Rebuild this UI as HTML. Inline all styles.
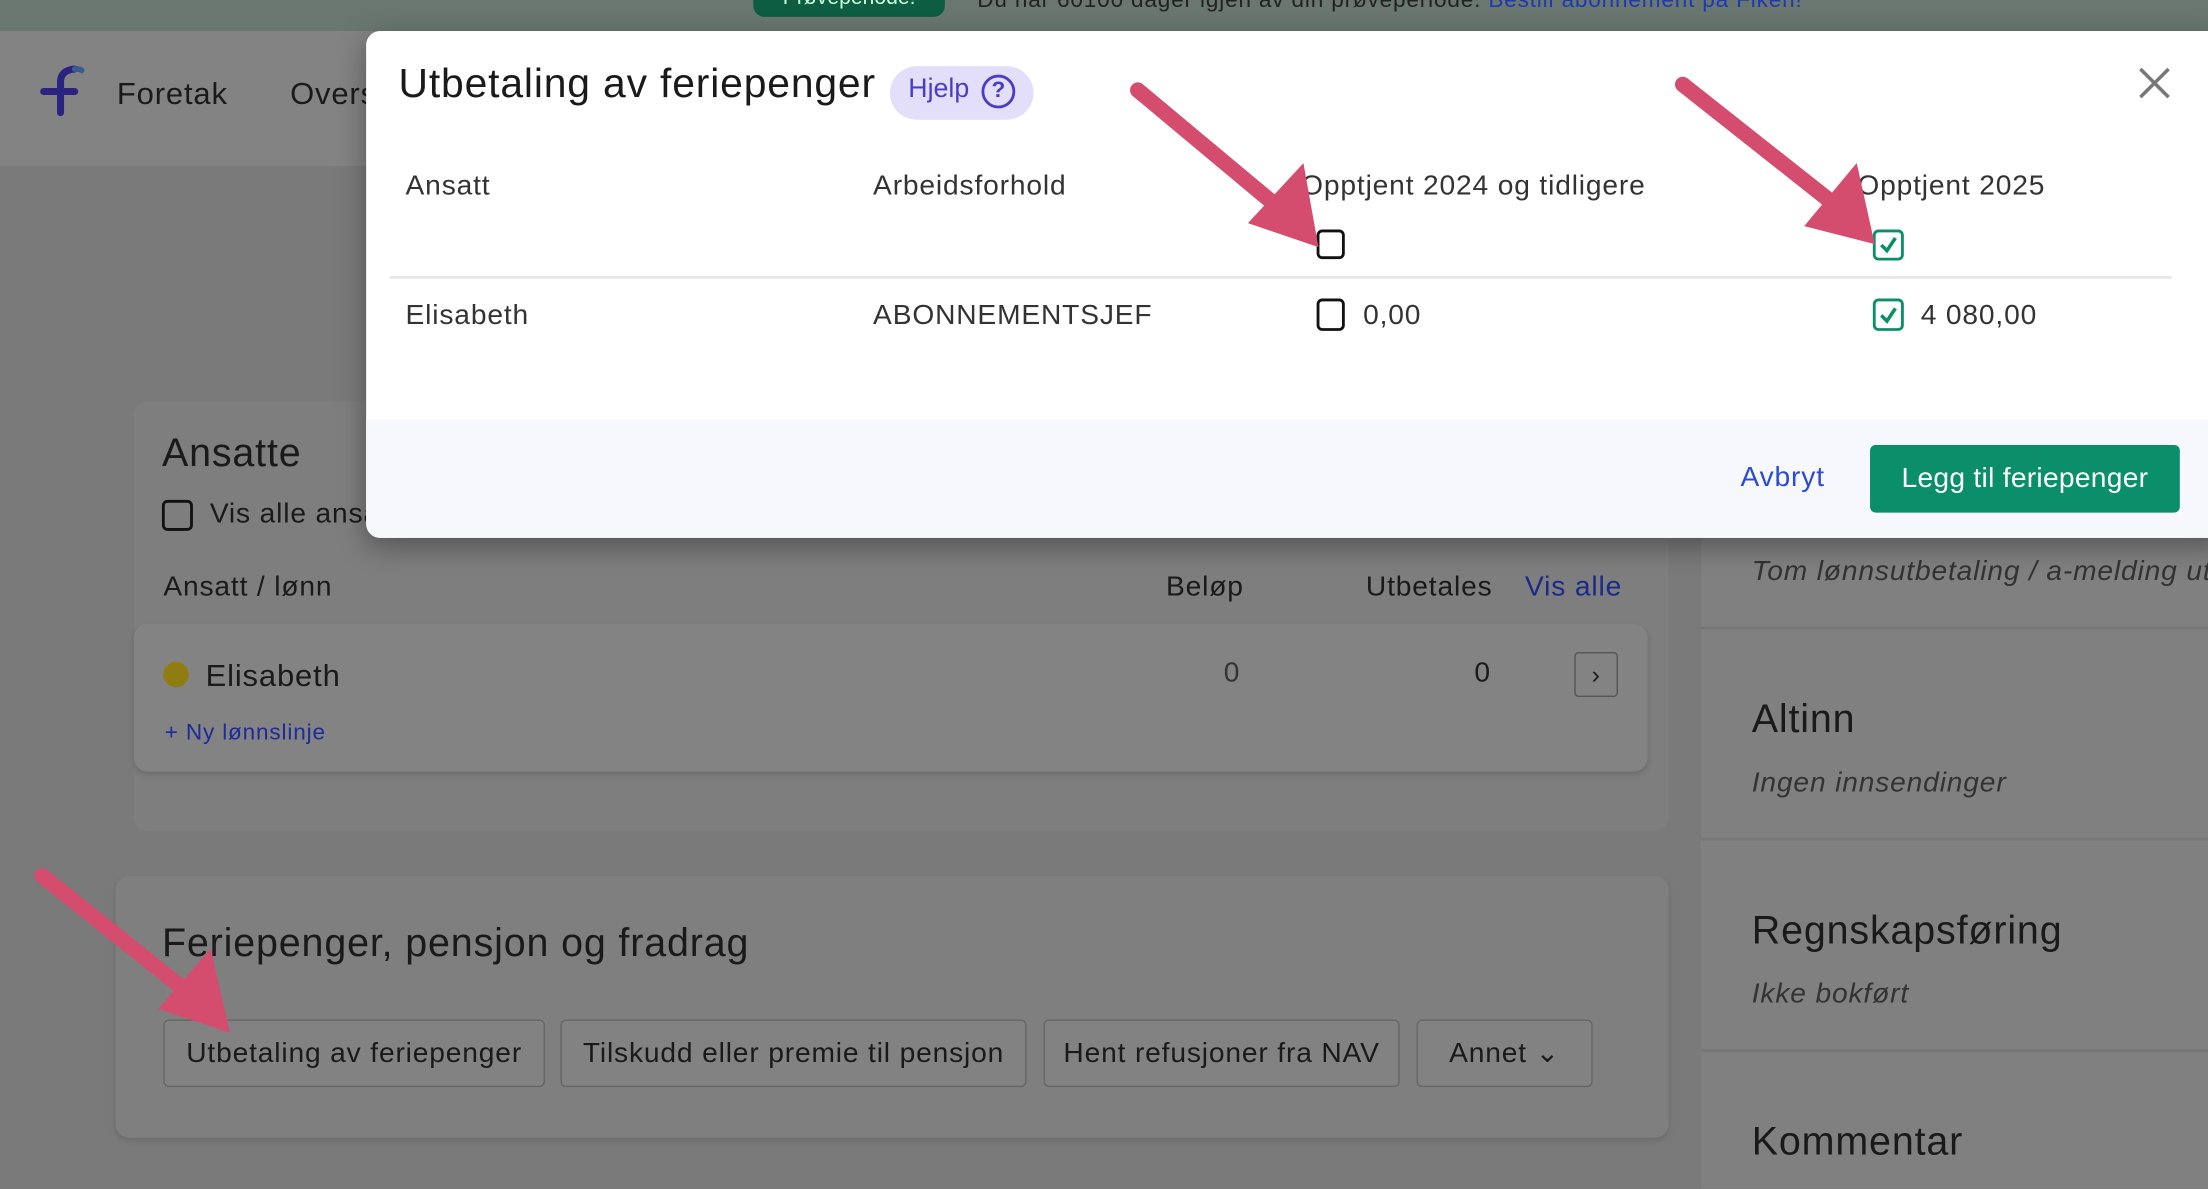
<!DOCTYPE html>
<html><head><meta charset="utf-8"><style>
html,body{margin:0;padding:0;width:2208px;height:1188px;overflow:hidden;background:#7a7a7a}
#w{position:absolute;left:0;top:0;width:1568px;height:844px;transform:scale(1.40816);transform-origin:0 0;font-family:"Liberation Sans",sans-serif;color:#1c1c1c;background:#7a7a7a;letter-spacing:0.6px}
.a{position:absolute;white-space:nowrap}
.bg{color:#1a1a1a}
.btn{position:absolute;border:1px solid #666;border-radius:4px;height:46px;top:724px;font-size:20px;line-height:46px;text-align:center;color:#1a1a1a;background:#828282}
.cb{position:absolute;width:18px;height:18px;border:2.5px solid #111;border-radius:4px;box-sizing:content-box}
.cbg{position:absolute;width:18px;height:18px;border:2.5px solid #0a8f6a;border-radius:4px}
.t{font-size:20px}
</style></head><body><div id="w">
<div class="a" style="left:0;top:0;width:1568px;height:22px;background:#6a7770"></div>
<div class="a" style="left:535px;top:-8px;width:136px;height:20px;background:#0c5d42;border-radius:8px;color:#cfd;font-size:15px;text-align:center;line-height:14px;letter-spacing:0">Prøveperiode!</div>
<div class="a" style="left:694px;top:-8px;font-size:16px;color:#222">Du har 60100 dager igjen av din prøveperiode. <span style="color:#1d3ab0">Bestill abonnement på Fiken!</span></div>
<div class="a" style="left:0;top:22px;width:1568px;height:96px;background:#838383"></div>
<svg class="a" style="left:26px;top:44px" width="36" height="40" viewBox="0 0 36 40"><path d="M17 36V14q0-8 10-9" stroke="#2b2380" stroke-width="5" fill="none" stroke-linecap="round"/><path d="M5 21h22" stroke="#2b2380" stroke-width="5" stroke-linecap="round"/><path d="M27 5q4 0 5 1" stroke="#3a5a90" stroke-width="4" fill="none" stroke-linecap="round"/></svg>
<div class="a bg" style="left:83px;top:54px;font-size:22px">Foretak</div>
<div class="a bg" style="left:206px;top:54px;font-size:22px">Oversikt</div>
<div class="a" style="left:95px;top:285px;width:1090px;height:305px;background:#7e7e7e;border-radius:10px"></div>
<div class="a bg" style="left:115px;top:306px;font-size:28px">Ansatte</div>
<div class="cb" style="left:115px;top:355px;border-color:#111"></div>
<div class="a bg t" style="left:149px;top:354px">Vis alle ansatte</div>
<div class="a bg t" style="left:116px;top:406px">Ansatt / lønn</div>
<div class="a bg t" style="left:828px;top:406px">Beløp</div>
<div class="a bg t" style="left:970px;top:406px">Utbetales</div>
<div class="a t" style="left:1083px;top:406px;color:#1a2a8a">Vis alle</div>
<div class="a" style="left:95px;top:443px;width:1075px;height:105px;background:#838383;border-radius:10px;box-shadow:0 2px 4px rgba(0,0,0,.15)"></div>
<div class="a" style="left:116px;top:470px;width:18px;height:18px;border-radius:50%;background:#8f7d10"></div>
<div class="a bg" style="left:146px;top:467px;font-size:22px">Elisabeth</div>
<div class="a" style="left:869px;top:467px;font-size:20px;color:#333">0</div>
<div class="a bg" style="left:1047px;top:467px;font-size:20px">0</div>
<div class="a" style="left:1118px;top:463px;width:29px;height:30px;border:1px solid #555;border-radius:3px;text-align:center;line-height:30px;font-size:18px">›</div>
<div class="a" style="left:117px;top:512px;font-size:16px;color:#1d2a9a">+ Ny lønnslinje</div>
<div class="a" style="left:82px;top:622px;width:1103px;height:186px;background:#7f7f7f;border-radius:10px;box-shadow:0 2px 4px rgba(0,0,0,.12)"></div>
<div class="a bg" style="left:115px;top:654px;font-size:28px">Feriepenger, pensjon og fradrag</div>
<div class="btn" style="left:116px;width:269px">Utbetaling av feriepenger</div>
<div class="btn" style="left:398px;width:329px">Tilskudd eller premie til pensjon</div>
<div class="btn" style="left:741px;width:251px">Hent refusjoner fra NAV</div>
<div class="btn" style="left:1006px;width:123px">Annet &#8964;</div>
<div class="a" style="left:1208px;top:382px;width:360px;height:462px;background:#808080"></div>
<div class="a" style="left:1208px;top:445px;width:360px;height:2px;background:#777"></div>
<div class="a" style="left:1208px;top:595px;width:360px;height:2px;background:#777"></div>
<div class="a" style="left:1208px;top:745px;width:360px;height:2px;background:#777"></div>
<div class="a t" style="left:1244px;top:395px;font-style:italic;color:#333">Tom lønnsutbetaling / a-melding ut</div>
<div class="a bg" style="left:1244px;top:495px;font-size:28px">Altinn</div>
<div class="a t" style="left:1244px;top:545px;font-style:italic;color:#333">Ingen innsendinger</div>
<div class="a bg" style="left:1244px;top:645px;font-size:28px">Regnskapsføring</div>
<div class="a t" style="left:1244px;top:695px;font-style:italic;color:#333">Ikke bokført</div>
<div class="a bg" style="left:1244px;top:795px;font-size:28px">Kommentar</div>
<div class="a" style="left:260px;top:22px;width:1320px;height:360px;background:#fff;border-radius:10px;box-shadow:0 6px 20px rgba(0,0,0,.35);overflow:hidden">
 <div class="a" style="left:0;top:276px;width:1320px;height:84px;background:#f7f8fb"></div>
</div>
<div class="a" style="left:283px;top:44px;font-size:29px;color:#1a1a1a">Utbetaling av feriepenger</div>
<div class="a" style="left:632px;top:47px;width:102px;height:38px;border-radius:19px;background:#e3dffb"></div>
<div class="a" style="left:645px;top:53px;font-size:19px;color:#4a3cc8;letter-spacing:0">Hjelp</div>
<div class="a" style="left:697px;top:53px;width:20px;height:20px;border:2px solid #4a3cc8;border-radius:50%;color:#4a3cc8;font-size:16px;text-align:center;line-height:20px;font-weight:bold;letter-spacing:0">?</div>
<svg class="a" style="left:1518px;top:47px" width="24" height="24"><path d="M2 2L22 22M22 2L2 22" stroke="#777" stroke-width="2.5"/></svg>
<div class="a t" style="left:288px;top:121px;color:#333">Ansatt</div>
<div class="a t" style="left:620px;top:121px;color:#333">Arbeidsforhold</div>
<div class="a t" style="left:924px;top:121px;color:#333">Opptjent 2024 og tidligere</div>
<div class="a t" style="left:1319px;top:121px;color:#333">Opptjent 2025</div>
<div class="cb" style="left:935px;top:163px;width:16px;height:17px"></div>
<div class="cbg" style="left:1330px;top:163px"><svg width="18" height="18" style="position:absolute;left:0;top:0"><path d="M4 9l4 4 6-9" stroke="#0a8f6a" stroke-width="2.5" fill="none"/></svg></div>
<div class="a" style="left:277px;top:196px;width:1265px;height:2px;background:#e6e6e6"></div>
<div class="a t" style="left:288px;top:213px;color:#333">Elisabeth</div>
<div class="a t" style="left:620px;top:213px;color:#333">ABONNEMENTSJEF</div>
<div class="cb" style="left:935px;top:212px;width:16px;height:19px"></div>
<div class="a t" style="left:968px;top:213px;color:#333">0,00</div>
<div class="cbg" style="left:1330px;top:212px;height:19px"><svg width="18" height="19" style="position:absolute;left:0;top:0"><path d="M4 10l4 4 6-9" stroke="#0a8f6a" stroke-width="2.5" fill="none"/></svg></div>
<div class="a t" style="left:1364px;top:213px;color:#333">4 080,00</div>
<div class="a t" style="left:1236px;top:328px;color:#2b4bd8">Avbryt</div>
<div class="a" style="left:1328px;top:316px;width:220px;height:48px;border-radius:4px;background:#0a8f6a;color:#fff;font-size:20px;text-align:center;line-height:48px;letter-spacing:0.2px">Legg til feriepenger</div>
<svg class="a" style="left:0;top:0" width="1568" height="844">
 <g fill="#d44d6e" stroke="#d44d6e" stroke-linecap="round">
  <line x1="808" y1="64" x2="905" y2="145" stroke-width="11"/>
  <polygon points="935,174 925,118 888,158" stroke-width="2"/>
  <line x1="1195" y1="60" x2="1300" y2="143" stroke-width="11"/>
  <polygon points="1330,172 1318,118 1283,160" stroke-width="2"/>
  <line x1="30" y1="622" x2="130" y2="702" stroke-width="11"/>
  <polygon points="162,732 149,676 114,716" stroke-width="2"/>
 </g>
</svg>
</div></body></html>
